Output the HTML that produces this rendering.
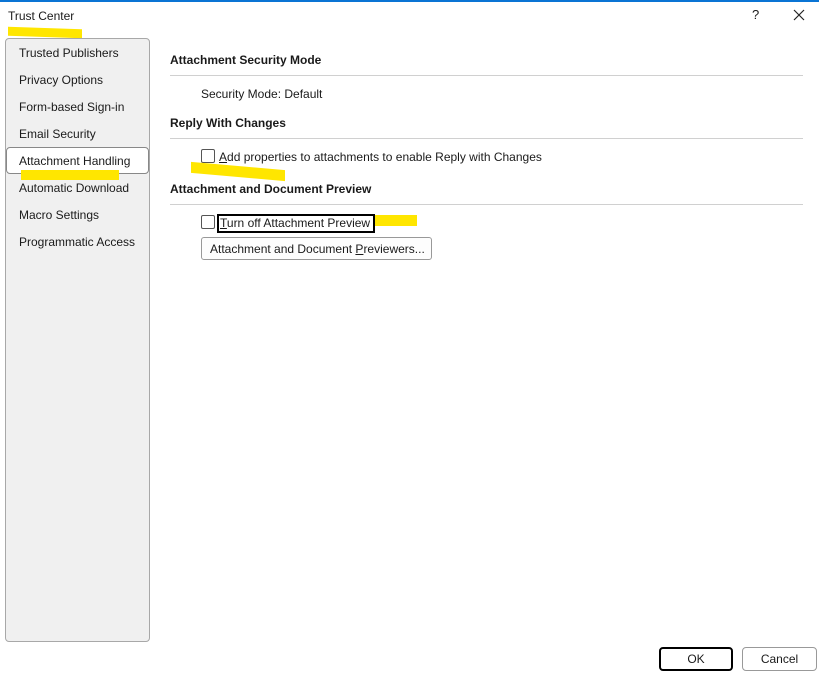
<!DOCTYPE html>
<html><head><style>
body{margin:0;width:819px;height:674px;background:#fff;position:relative;overflow:hidden;font-family:"Liberation Sans",sans-serif;font-size:12px;color:#1a1a1a}
.a{position:absolute;white-space:nowrap}
.hl{position:absolute;background:#ffe600}
.line{position:absolute;left:170px;width:633px;height:1px;background:#d0d0d0}
.cb{position:absolute;width:12px;height:12px;border:1px solid #555;border-radius:2px;background:#fff}
b{font-weight:bold}
</style></head><body>
<div class="a" style="left:0;top:0;width:819px;height:2px;background:#0a74d4"></div>
<div class="a" style="left:8px;top:9px">Trust Center</div>
<div class="a" style="left:752px;top:7px;font-size:13px">?</div>
<svg class="a" style="left:793px;top:9px" width="12" height="12"><path d="M1 1L11 11M11 1L1 11" stroke="#222" stroke-width="1.2"/></svg>
<div class="hl" style="left:8px;top:28px;width:74px;height:9px;transform:skewY(2deg)"></div>

<div class="a" style="left:5px;top:38px;width:143px;height:602px;background:#f0f0f0;border:1px solid #a8a8a8;border-radius:4px"></div>
<div class="a" style="left:6px;top:147px;width:141px;height:25px;background:#fff;border:1px solid #888;border-radius:4px"></div>
<div class="a" style="left:19px;top:46px">Trusted Publishers</div>
<div class="a" style="left:19px;top:73px">Privacy Options</div>
<div class="a" style="left:19px;top:100px">Form-based Sign-in</div>
<div class="a" style="left:19px;top:127px">Email Security</div>
<div class="a" style="left:19px;top:154px">Attachment Handling</div>
<div class="a" style="left:19px;top:181px">Automatic Download</div>
<div class="a" style="left:19px;top:208px">Macro Settings</div>
<div class="a" style="left:19px;top:235px">Programmatic Access</div>
<div class="hl" style="left:21px;top:170px;width:98px;height:10px"></div>

<div class="a" style="left:170px;top:53px"><b>Attachment Security Mode</b></div>
<div class="line" style="top:75px"></div>
<div class="a" style="left:201px;top:87px">Security Mode: Default</div>
<div class="a" style="left:170px;top:116px"><b>Reply With Changes</b></div>
<div class="line" style="top:138px"></div>
<div class="cb" style="left:201px;top:149px"></div>
<div class="a" style="left:219px;top:150px"><u>A</u>dd properties to attachments to enable Reply with Changes</div>
<div class="hl" style="left:191px;top:166px;width:94px;height:11px;transform:skewY(5deg)"></div>
<div class="a" style="left:170px;top:182px"><b>Attachment and Document Preview</b></div>
<div class="line" style="top:204px"></div>
<div class="cb" style="left:201px;top:215px"></div>
<div class="a" style="left:217px;top:214px;width:154px;height:15px;border:2px solid #000"></div>
<div class="a" style="left:220px;top:216px"><u>T</u>urn off Attachment Preview</div>
<div class="hl" style="left:375px;top:215px;width:42px;height:11px"></div>
<div class="a" style="left:201px;top:237px;width:229px;height:21px;border:1px solid #999;border-radius:3px;background:#fdfdfd"></div>
<div class="a" style="left:210px;top:242px">Attachment and Document <u>P</u>reviewers...</div>

<div class="a" style="left:659px;top:647px;width:70px;height:20px;border:2px solid #000;border-radius:4px;text-align:center;line-height:20px">OK</div>
<div class="a" style="left:742px;top:647px;width:73px;height:22px;border:1px solid #999;border-radius:4px;text-align:center;line-height:22px">Cancel</div>
</body></html>
